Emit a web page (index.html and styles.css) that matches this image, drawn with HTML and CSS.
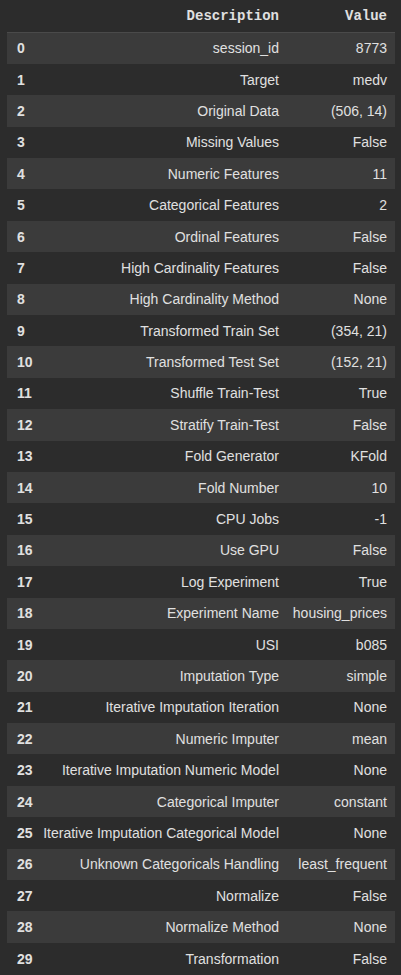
FILE: index.html
```html
<!DOCTYPE html>
<html>
<head>
<meta charset="utf-8">
<link rel="stylesheet" href="styles.css">
</head>
<body>
<table class="df">
  <colgroup><col class="c-idx"><col class="c-desc"><col class="c-val"></colgroup>
  <thead>
    <tr><th></th><th>Description</th><th>Value</th></tr>
  </thead>
  <tbody>
    <tr><th>0</th><td>session_id</td><td>8773</td></tr>
    <tr><th>1</th><td>Target</td><td>medv</td></tr>
    <tr><th>2</th><td>Original Data</td><td>(506, 14)</td></tr>
    <tr><th>3</th><td>Missing Values</td><td>False</td></tr>
    <tr><th>4</th><td>Numeric Features</td><td>11</td></tr>
    <tr><th>5</th><td>Categorical Features</td><td>2</td></tr>
    <tr><th>6</th><td>Ordinal Features</td><td>False</td></tr>
    <tr><th>7</th><td>High Cardinality Features</td><td>False</td></tr>
    <tr><th>8</th><td>High Cardinality Method</td><td>None</td></tr>
    <tr><th>9</th><td>Transformed Train Set</td><td>(354, 21)</td></tr>
    <tr><th>10</th><td>Transformed Test Set</td><td>(152, 21)</td></tr>
    <tr><th>11</th><td>Shuffle Train-Test</td><td>True</td></tr>
    <tr><th>12</th><td>Stratify Train-Test</td><td>False</td></tr>
    <tr><th>13</th><td>Fold Generator</td><td>KFold</td></tr>
    <tr><th>14</th><td>Fold Number</td><td>10</td></tr>
    <tr><th>15</th><td>CPU Jobs</td><td>-1</td></tr>
    <tr><th>16</th><td>Use GPU</td><td>False</td></tr>
    <tr><th>17</th><td>Log Experiment</td><td>True</td></tr>
    <tr><th>18</th><td>Experiment Name</td><td>housing_prices</td></tr>
    <tr><th>19</th><td>USI</td><td>b085</td></tr>
    <tr><th>20</th><td>Imputation Type</td><td>simple</td></tr>
    <tr><th>21</th><td>Iterative Imputation Iteration</td><td>None</td></tr>
    <tr><th>22</th><td>Numeric Imputer</td><td>mean</td></tr>
    <tr><th>23</th><td>Iterative Imputation Numeric Model</td><td>None</td></tr>
    <tr><th>24</th><td>Categorical Imputer</td><td>constant</td></tr>
    <tr><th>25</th><td>Iterative Imputation Categorical Model</td><td>None</td></tr>
    <tr><th>26</th><td>Unknown Categoricals Handling</td><td>least_frequent</td></tr>
    <tr><th>27</th><td>Normalize</td><td>False</td></tr>
    <tr><th>28</th><td>Normalize Method</td><td>None</td></tr>
    <tr><th>29</th><td>Transformation</td><td>False</td></tr>
  </tbody>
</table>
</body>
</html>
```
FILE: styles.css
```css
html, body {
  margin: 0;
  padding: 0;
  background: #2c2c2c;
}
body {
  padding-left: 7px;
  color: #e0e0e0;
  font-family: "Liberation Sans", Arial, sans-serif;
  font-size: 14px;
}
.df {
  border-collapse: collapse;
  table-layout: fixed;
  width: 388px;
}
.c-idx { width: 29px; }
.c-desc { width: 251px; }
.c-val { width: 108px; }
.df thead tr {
  border-bottom: 1px solid #4a4a4a;
}
.df thead th {
  height: 32px;
  padding: 0 8px 0 0;
  text-align: right;
  font-family: "Liberation Mono", "Courier New", monospace;
  font-weight: bold;
  font-size: 14px;
  color: #e0e0e0;
  vertical-align: middle;
}
.df tbody tr {
  height: 31.4px;
}
.df tbody tr:nth-child(odd) {
  background: #3b3b3b;
}
.df tbody th {
  text-align: left;
  padding: 0 0 0 10px;
  font-weight: bold;
  white-space: nowrap;
}
.df tbody td {
  text-align: right;
  padding: 0 8px 0 0;
  white-space: nowrap;
}
.df th, .df td {
  vertical-align: middle;
}
```
